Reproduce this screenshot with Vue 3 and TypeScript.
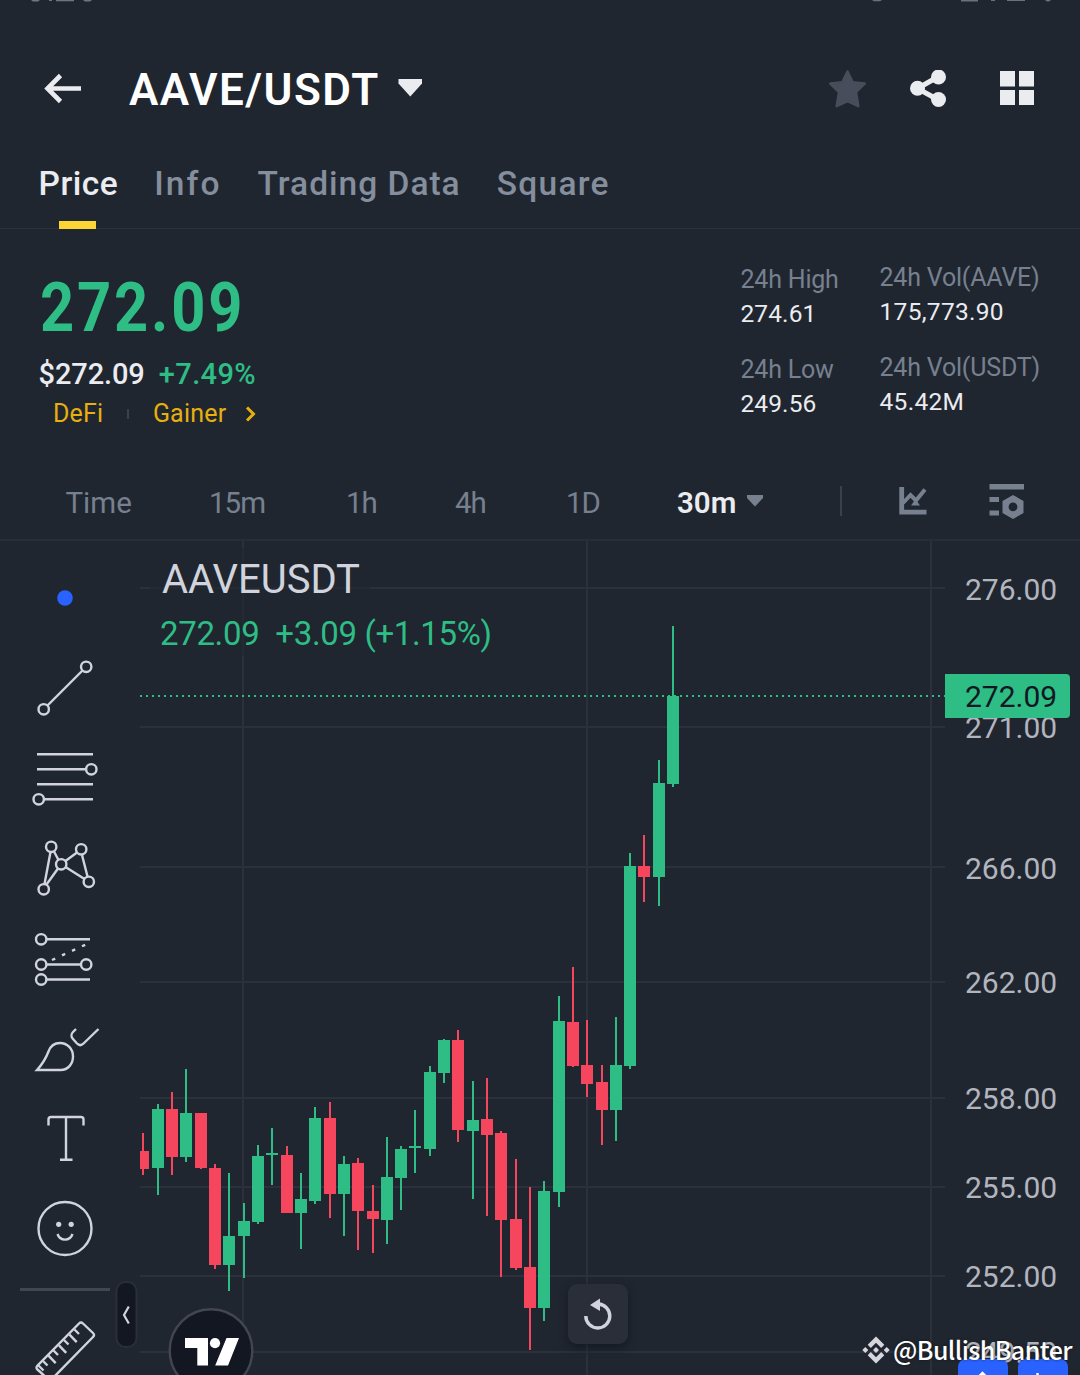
<script setup lang="ts">
type Candle = [up: boolean, top: number, bottom: number, high: number, low: number]

const tabs = ['Price', 'Info', 'Trading Data', 'Square']
const intervals = ['Time', '15m', '1h', '4h', '1D']

const stats = [
  [
    { label: '24h High', value: '274.61' },
    { label: '24h Low', value: '249.56' },
  ],
  [
    { label: '24h Vol(AAVE)', value: '175,773.90' },
    { label: '24h Vol(USDT)', value: '45.42M' },
  ],
]

const levels = [
  { price: '276.00', y: 588, baseline: 600 },
  { price: '271.00', y: 727, baseline: 738 },
  { price: '266.00', y: 867, baseline: 879 },
  { price: '262.00', y: 982, baseline: 993 },
  { price: '258.00', y: 1098, baseline: 1109 },
  { price: '255.00', y: 1187, baseline: 1198 },
  { price: '252.00', y: 1276, baseline: 1287 },
  { price: '249.50', y: 1352, baseline: 1363 },
]
const sessions = [242, 586, 930]

const candles: Candle[] = [
  [false, 1151, 1169, 1133, 1175],
  [true, 1109, 1168, 1104, 1195],
  [false, 1109, 1157, 1092, 1175],
  [true, 1113, 1157, 1069, 1162],
  [false, 1113, 1168, 1113, 1169],
  [false, 1168, 1265, 1164, 1269],
  [true, 1236, 1265, 1173, 1291],
  [true, 1221, 1236, 1203, 1278],
  [true, 1156, 1222, 1145, 1224],
  [true, 1153, 1155, 1128, 1185],
  [false, 1155, 1213, 1146, 1213],
  [true, 1199, 1213, 1173, 1249],
  [true, 1118, 1201, 1107, 1204],
  [false, 1118, 1194, 1102, 1218],
  [true, 1164, 1194, 1156, 1236],
  [false, 1163, 1211, 1158, 1250],
  [false, 1211, 1219, 1185, 1253],
  [true, 1177, 1220, 1137, 1244],
  [true, 1149, 1178, 1146, 1210],
  [true, 1146, 1148, 1110, 1173],
  [true, 1072, 1149, 1066, 1156],
  [true, 1040, 1073, 1039, 1083],
  [false, 1040, 1130, 1030, 1142],
  [true, 1120, 1131, 1081, 1199],
  [false, 1119, 1135, 1078, 1216],
  [false, 1133, 1220, 1131, 1277],
  [false, 1219, 1268, 1159, 1270],
  [false, 1267, 1308, 1187, 1350],
  [true, 1191, 1308, 1181, 1321],
  [true, 1021, 1192, 996, 1207],
  [false, 1022, 1066, 967, 1067],
  [false, 1065, 1084, 1020, 1097],
  [false, 1082, 1110, 1065, 1145],
  [true, 1065, 1110, 1017, 1141],
  [true, 866, 1066, 853, 1069],
  [false, 866, 877, 835, 902],
  [true, 783, 877, 760, 906],
  [true, 696, 784, 626, 787],
]

const candleX = (i: number): number => Math.floor(137.99 + i * 14.3133)
</script>

<template>
  <main class="screen">
    <svg class="status" width="1080" height="50" viewBox="0 0 1080 50" fill="#8b919b">
      <path d="M31 0h9l-2 1.400h-5zM49 0h3v1h-3zM56 0h18v1.200h-18zM83 0h9l-2 1.400h-5z" opacity=".75" />
      <path d="M872 0h10l-2 1.300h-6zM961 0h17v1.400h-17zM991 0h4v1h-4zM1007 0h18v1h-18zM1045 0h6l-2 1.400h-2z" opacity=".7" />
    </svg>

    <header class="header">
      <svg class="back" width="40" height="40" viewBox="43 70 40 40" fill="none" stroke="#eaecef" stroke-width="4.600">
        <path d="M81 88.500H48M60.500 75.500 47.500 88.500l13 13" />
      </svg>
      <h1 class="pair">AAVE/USDT</h1>
      <svg class="caret" width="26" height="40" viewBox="397 70 26 40">
        <path d="M398.500 79h23.500v4.500L410.300 96.500 398.500 83.500z" fill="#eaecef" />
      </svg>
      <nav class="actions">
        <svg width="40" height="40" viewBox="828 70 40 40">
          <path
            d="M847.500 71.500l5.200 10.800 12 1.300-8.700 8.400 2.300 14.200-10.800-5.200-10.800 5.200 2.300-14.200-8.700-8.400 12-1.300z"
            fill="#474d5a" stroke="#474d5a" stroke-width="2.500" stroke-linejoin="round"
          />
        </svg>
        <svg width="40" height="40" viewBox="908 70 40 40" fill="#eaecef">
          <path d="M938.500 76.500 917.500 88.500l21 11.500" fill="none" stroke="#eaecef" stroke-width="5" />
          <circle cx="938.500" cy="77" r="7.500" />
          <circle cx="917.500" cy="88.300" r="7.500" />
          <circle cx="938.500" cy="99.500" r="7.500" />
        </svg>
        <svg width="40" height="40" viewBox="997 70 40 40" fill="#eaecef">
          <path d="M1000 71h15v15.500h-15zM1019 71h15v15.500h-15zM1000 90h15v15h-15zM1019 90h15v15h-15z" />
        </svg>
      </nav>
    </header>

    <nav class="tabs">
      <span v-for="(tab, i) in tabs" :key="tab" class="tab" :class="{ active: i === 0 }">{{ tab }}</span>
    </nav>

    <section class="summary">
      <div class="quote">
        <div class="last">272.09</div>
        <div class="fiat"><span class="usd">$272.09</span><span class="change">+7.49%</span></div>
        <div class="tags">
          <span>DeFi</span>
          <i class="tag-sep"></i>
          <span class="gainer">Gainer</span>
          <svg width="14" height="20" viewBox="0 0 14 20" fill="none" stroke="#e6b00e" stroke-width="3">
            <path d="M3 3.500 9.500 10 3 16.500" />
          </svg>
        </div>
      </div>
      <div v-for="(column, i) in stats" :key="i" class="stat-column">
        <dl v-for="stat in column" :key="stat.label" class="stat">
          <dt>{{ stat.label }}</dt>
          <dd>{{ stat.value }}</dd>
        </dl>
      </div>
    </section>

    <nav class="intervals">
      <span v-for="item in intervals" :key="item">{{ item }}</span>
      <span class="selected">
        30m
        <svg width="18" height="14" viewBox="0 0 18 14"><path d="M1 1h16v3L9 12.500 1 4z" fill="#76808f" /></svg>
      </span>
      <i class="interval-sep"></i>
      <svg width="28" height="28" viewBox="899 487 28 28" fill="none" stroke="#76808f">
        <path d="M901.700 487v25.200H926.500" stroke-width="4.800" />
        <path d="M903 503l7.500-8 5.500 5.500 9-11" stroke-width="4" />
        <path d="M915.500 499l4.500 6.500h-9z" fill="#76808f" stroke="none" />
      </svg>
      <svg width="36" height="36" viewBox="989 483.500 36 36" fill="#76808f">
        <path d="M989.500 484.500h34.500v5.500h-34.500zM989.500 497.500h9.500v5h-9.500zM989.500 511h9.500v5h-9.500z" />
        <path fill-rule="evenodd" d="M1013 495.500l10.500 6v12l-10.500 6-10.500-6v-12zm0 7.500a4.400 4.400 0 1 0 0 8.800 4.400 4.400 0 1 0 0-8.800z" />
      </svg>
    </nav>

    <section class="chart">
      <aside class="tools">
        <svg width="140" height="834" viewBox="0 541 140 834" fill="none" stroke="#d1d4dc" stroke-width="2.400">
          <circle cx="65" cy="598" r="7.800" fill="#2962ff" stroke="none" />

          <path d="M47.500 705.500 82.500 670.500" />
          <circle cx="43.700" cy="709.300" r="5.200" />
          <circle cx="86.200" cy="666.800" r="5.200" />

          <path d="M37 754.300h56M37 769.300h49M37 784.300h56M44 799.300h49" />
          <circle cx="91.300" cy="769.300" r="5.200" />
          <circle cx="38.700" cy="799.300" r="5.200" />

          <path d="M50.500 852 44.500 884M54 851.500l4.500 8.500M65.500 861 77 852.500M82 855l5.500 21.500M65.500 867 84.500 879M58 868.500 46.500 884.500" />
          <circle cx="51.200" cy="846.800" r="5.200" />
          <circle cx="81.200" cy="849.300" r="5.200" />
          <circle cx="61.200" cy="864.300" r="5.200" />
          <circle cx="88.800" cy="881.800" r="5.200" />
          <circle cx="43.700" cy="889.300" r="5.200" />

          <path d="M46.500 939.300H90M46.500 964.500H81M46.500 979.500H90" />
          <path d="M52 960 88 943.500" stroke-dasharray="3.500 7.500" />
          <circle cx="41.200" cy="939.300" r="5.200" />
          <circle cx="41.200" cy="964.500" r="5.200" />
          <circle cx="41.200" cy="979.500" r="5.200" />
          <circle cx="86.200" cy="964.500" r="5.200" />

          <path d="M37 1070h23.500c8 0 12.500-6.500 12.500-13.500 0-7.500-5.500-13.500-13-13.500-5.500 0-9.500 3-11.500 8.500-2.500 6.500-6 12.500-11.500 18.500z" />
          <path d="M76 1029l-3 3c-2 2-2 5 0 7l4 4.500c2 2 4.500 2 6.500 0L98.500 1029" />

          <path d="M48.500 1125.500v-6q0-2.500 2.500-2.500h30q2.500 0 2.500 2.500v6M66 1117v42.500M60 1159.800h12.500" />

          <circle cx="65" cy="1228.500" r="26.500" />
          <circle cx="58.700" cy="1224.300" r="2.600" fill="#d1d4dc" stroke="none" />
          <circle cx="71.200" cy="1224.300" r="2.600" fill="#d1d4dc" stroke="none" />
          <path d="M57.500 1234c2.500 7.500 12.500 7.500 15 0" />

          <path d="M20 1289.500h90" stroke="#434651" stroke-width="3" />

          <path d="M50 1381 37.500 1369.500q-2-1.800 0-3.800L79 1323.500q2-2 4 0l10 9.500q2 2 0 4L50 1381" />
          <path d="M78 1328.500l4.500 4.500M73 1333.700l7.200 7.500M67.500 1339l4.500 4.500M62.500 1344.300l7.200 7.500M57 1349.500l4.500 4.500M52 1354.700l7.200 7.500M46.500 1360l4.500 4.500M42 1364.500l5 5" transform="translate(-3.500 1)" />

          <rect x="116.500" y="1282" width="20" height="65" rx="9" fill="#131722" stroke="#2a2e39" stroke-width="2" />
          <path d="M128.800 1306.500 124 1315l4.800 8.500" stroke-width="2.200" />
        </svg>
      </aside>

      <div class="plot">
        <svg width="805" height="834" viewBox="140 541 805 834" shape-rendering="crispEdges">
          <g fill="#2b303b">
            <rect v-for="level in levels" :key="level.y" x="140" :y="level.y - 1" width="805" height="2" />
            <rect v-for="x in sessions" :key="x" :x="x" y="541" width="2" height="834" />
          </g>
          <path d="M150 548h220v60h132v48H150z" fill="#202630" fill-opacity=".6" />
          <path d="M140 696H945" stroke="#2ebd85" stroke-width="2" stroke-dasharray="2 4" />
          <g v-for="(c, i) in candles" :key="i" :fill="c[0] ? '#2ebd85' : '#f6465d'">
            <rect :x="candleX(i) + 5" :y="c[3]" width="2" :height="c[4] - c[3]" />
            <rect :x="candleX(i)" :y="c[1]" width="12" :height="c[2] - c[1]" />
          </g>
          <g shape-rendering="geometricPrecision">
            <circle cx="211" cy="1350.500" r="41.300" fill="#131722" stroke="#434651" stroke-width="2.400" />
            <path d="M185 1338h23v27.500h-10.700V1348H185zM226.500 1338H239l-11 27.500h-12.800z" fill="#fff" />
            <circle cx="215" cy="1343.200" r="5.100" fill="#fff" />
          </g>
        </svg>
        <div class="legend">
          <div class="symbol">AAVEUSDT</div>
          <div class="ohlc"><span>272.09</span><span>+3.09 (+1.15%)</span></div>
        </div>
        <button class="reset" type="button" aria-label="Reset chart">
          <svg width="32" height="36" viewBox="582 1296 32 36">
            <path d="M585.800 1316a12 12 0 1 0 12.500-12" fill="none" stroke="#d1d4dc" stroke-width="3.400" />
            <path d="M590 1305l10-6.500v12.500z" fill="#d1d4dc" />
          </svg>
        </button>
      </div>

      <aside class="axis">
        <svg width="135" height="834" viewBox="945 541 135 834">
          <text v-for="level in levels" :key="level.price" x="965" :y="level.baseline" class="level">{{ level.price }}</text>
          <path d="M945 674h121q4 0 4 4v36q0 4-4 4H945z" fill="#2ebd85" />
          <text x="965" y="707" class="level current">272.09</text>
          <g fill="#2962ff">
            <rect x="958" y="1359" width="50" height="40" rx="8" />
            <rect x="1018" y="1359" width="50" height="40" rx="8" />
          </g>
          <path d="M979 1376.500l3.500-3.500 3.500 3.500M1037.500 1373v3" fill="none" stroke="#fff" stroke-width="2.400" />
        </svg>
      </aside>
    </section>

    <div class="watermark">
      <svg width="28" height="28" viewBox="0 0 28 28" fill="#d5d7dc">
        <path d="M14 .500l8.300 8.300-3.100 3.100L14 6.700 8.800 11.900 5.700 8.800zM14 27.500l8.300-8.300-3.100-3.100L14 21.300 8.800 16.100 5.700 19.200zM3.300 11l3 3-3 3-3-3zM24.700 11l3 3-3 3-3-3zM14 11l3 3-3 3-3-3z" />
      </svg>
      <span>@BullishBanter</span>
    </div>
  </main>
</template>

<style>
body {
  background: #202630;
}
</style>

<style scoped>
.screen {
  position: relative;
  display: flex;
  flex-direction: column;
  width: 1080px;
  height: 1375px;
  overflow: hidden;
  background: #202630;
  color: #eaecef;
  font-family: Roboto, 'Liberation Sans', sans-serif;
}
svg {
  display: block;
  flex: none;
}
.status {
  height: 50px;
}
.header {
  display: flex;
  align-items: center;
  height: 80px;
  flex: none;
  padding: 0 43px;
}
.pair {
  margin: 0 0 0 46px;
  width: 268px;
  font-size: 44px;
  line-height: 60px;
  font-weight: 600;
  letter-spacing: 1.5px;
  color: #fff;
  white-space: nowrap;
}
.actions {
  display: flex;
  margin-left: auto;
}
.actions svg:nth-child(1) {
  margin-right: 40.500px;
}
.actions svg:nth-child(2) {
  margin-right: 49px;
}
.tabs {
  display: flex;
  flex: none;
  gap: 36px;
  height: 64px;
  padding: 34px 0 0 38.500px;
  border-bottom: 1px solid #2b303b;
  font-size: 33.500px;
  font-weight: 500;
  line-height: 40px;
  letter-spacing: 1px;
  color: #848e9c;
}
.tab {
  position: relative;
}
.tab:nth-child(2) {
  letter-spacing: 2.100px;
}
.tab:nth-child(4) {
  letter-spacing: 1.300px;
}
.active {
  color: #eaecef;
  letter-spacing: 0.500px;
}
.active::after {
  content: '';
  position: absolute;
  left: 20.500px;
  top: 56.500px;
  width: 37px;
  height: 8px;
  background: #fcd535;
}
.summary {
  display: flex;
  flex: none;
  height: 237px;
}
.quote {
  width: 740.500px;
  padding-top: 39px;
  padding-left: 39px;
  box-sizing: border-box;
}
.last {
  margin-left: 1px;
  font-size: 68px;
  font-weight: 700;
  line-height: 80px;
  letter-spacing: 3.200px;
  color: #2ebd85;
  transform: scaleX(0.877);
  transform-origin: 0 50%;
}
.fiat {
  display: flex;
  gap: 14px;
  margin-top: 6px;
  margin-left: -0.500px;
  font-size: 29px;
  line-height: 40px;
  font-weight: 500;
}
.usd {
  letter-spacing: -0.100px;
}
.change {
  letter-spacing: 0.400px;
  color: #2ebd85;
}
.tags {
  display: flex;
  align-items: center;
  margin-top: 2px;
  padding-left: 14px;
  font-size: 25px;
  line-height: 36px;
  letter-spacing: 0.200px;
  color: #e6b00e;
}
.tag-sep {
  width: 2px;
  height: 10px;
  margin: 0 23.500px 0 24px;
  background: #3a404c;
}
.gainer {
  margin-right: 17.500px;
}
.stat-column {
  width: 139px;
  flex: none;
  padding-top: 33px;
}
.stat-column:last-child {
  width: 200px;
  padding-top: 31px;
}
.stat {
  margin: 0 0 20px;
  font-size: 25px;
  line-height: 35px;
  white-space: nowrap;
}
.stat dt {
  letter-spacing: -0.200px;
  color: #76808f;
}
.stat dd {
  height: 35px;
  margin: 0;
  font-size: 24.500px;
  line-height: 33px;
  letter-spacing: 0.100px;
}
.stat-column:last-child dd {
  letter-spacing: 0.300px;
}
.intervals {
  display: grid;
  grid-template-columns: 144px 137px 109px 111px 110.500px 162.500px 59.500px 90px 40px;
  align-items: center;
  flex: none;
  height: 73px;
  padding-left: 65.500px;
  border-bottom: 2px solid #282d38;
  font-size: 29.500px;
  color: #76808f;
}
.intervals > span:nth-child(n + 2):nth-child(-n + 5) {
  margin-left: -0.500px;
  letter-spacing: -1px;
}
.intervals svg,
.interval-sep {
  margin-bottom: 4px;
}
.selected {
  display: flex;
  align-items: center;
  gap: 10px;
  font-weight: 600;
  color: #eaecef;
}
.interval-sep {
  width: 2px;
  height: 30px;
  background: #3a404c;
}
.chart {
  display: flex;
  flex: none;
  height: 834px;
}
.tools {
  width: 140px;
}
.plot {
  position: relative;
  width: 805px;
}
.legend {
  position: absolute;
  left: 21px;
  top: 15px;
  white-space: nowrap;
}
.symbol {
  padding-left: 1px;
  font-size: 40px;
  line-height: 48px;
  color: #d1d4dc;
}
.ohlc {
  display: flex;
  gap: 16px;
  margin-top: 8px;
  margin-left: -1px;
  font-size: 33px;
  line-height: 44px;
  letter-spacing: -0.350px;
  color: #2ebd85;
}
.reset {
  position: absolute;
  left: 428px;
  top: 743px;
  display: flex;
  align-items: center;
  justify-content: center;
  width: 60px;
  height: 60px;
  padding: 0;
  border: 0;
  border-radius: 9px;
  background: #2a2e39;
  box-shadow: 0 4px 8px rgba(10, 13, 20, 0.5);
}
.axis {
  width: 135px;
}
.level {
  font-size: 30px;
  fill: #b2b5be;
}
.current {
  fill: #131722;
}
.watermark {
  position: absolute;
  left: 862px;
  top: 1334px;
  display: flex;
  align-items: center;
  gap: 3px;
  font-family: 'Noto Sans CJK SC', 'Noto Sans', sans-serif;
  font-size: 25px;
  font-weight: 500;
  line-height: 34px;
  letter-spacing: -0.550px;
  color: #fff;
  white-space: nowrap;
  text-shadow: 0 0 3px rgba(0, 0, 0, 0.55);
}
.watermark span {
  margin-top: -2px;
}
</style>
